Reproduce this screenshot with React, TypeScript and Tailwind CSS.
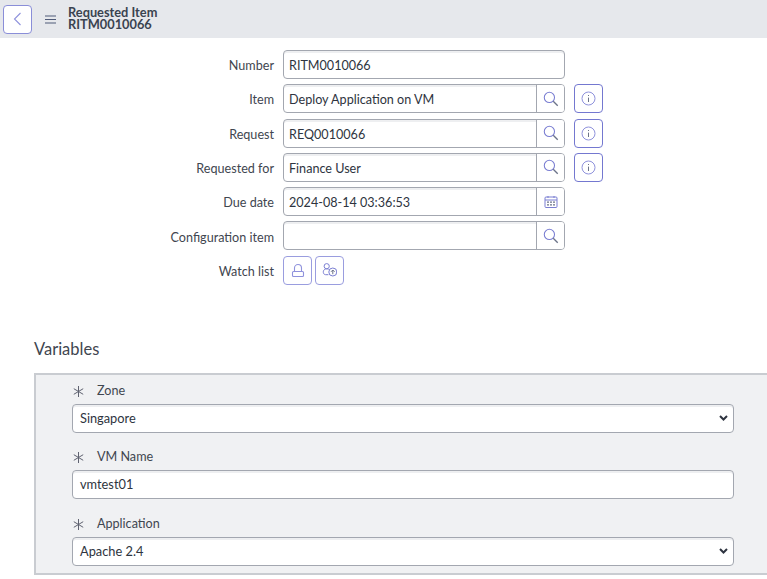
import { ReactNode } from 'react';

const iconStroke = '#7a7ed2';

function SearchIcon() {
    return (
        <svg width="16" height="16" viewBox="0 0 15 15" fill="none" stroke={iconStroke} strokeWidth="1">
            <circle cx="6" cy="6" r="4.8" />
            <path d="M9.6 9.6 L13.8 13.8" stroke="#6b7388" strokeWidth="1.2" />
        </svg>
    );
}

function InfoIcon() {
    return (
        <svg width="15" height="15" viewBox="0 0 15 15" fill="none" stroke="#8f92dc" strokeWidth="1">
            <circle cx="7.5" cy="7.5" r="6.5" />
            <path d="M7.5 6.6 V11 M7.5 4 V5" stroke="#6b7388" />
        </svg>
    );
}

function CalendarIcon() {
    return (
        <svg width="14" height="14" viewBox="0 0 14 14" fill="none" stroke={iconStroke} strokeWidth="1">
            <rect x="1" y="2" width="12" height="10.5" rx="1" />
            <path d="M1 5 H13 M4 1 V3 M10 1 V3" />
            <path d="M3 7.2 H5 M6 7.2 H8 M9 7.2 H11 M3 9.8 H5 M6 9.8 H8 M9 9.8 H11" stroke="#6b7388" strokeWidth="1.2" />
        </svg>
    );
}

function LockIcon() {
    return (
        <svg width="14" height="15" viewBox="0 0 14 15" fill="none" stroke="#8f92dc" strokeWidth="1.1">
            <rect x="1.5" y="8.5" width="11" height="5" rx="1" />
            <path d="M3.5 8.5 V5 a3.5 3.5 0 0 1 7 0 V8.5" />
        </svg>
    );
}

function AddUserIcon() {
    return (
        <svg width="15" height="15" viewBox="0 0 15 15" fill="none" stroke="#7a7ed2" strokeWidth="1">
            <circle cx="4.7" cy="3.2" r="2.6" />
            <path d="M6.6 6.4 C5.4 5.6 3.6 5.6 2.4 6.6 C0.6 8 1 11.6 3.6 11.7 H6.4" />
            <circle cx="10.8" cy="9" r="4" />
            <path d="M10.8 7 V11.2 M9 8.8 L10.8 7 L12.6 8.8" stroke="#6b7388" />
        </svg>
    );
}

function Asterisk() {
    return (
        <svg width="11" height="11" viewBox="0 0 11 11" fill="none" stroke="#5f6270" strokeWidth="1">
            <path d="M5.5 0 V11 M0.8 2.7 L10.2 8.3 M10.2 2.7 L0.8 8.3" />
        </svg>
    );
}

function Chevron() {
    return (
        <svg width="9" height="6" viewBox="0 0 9 6" fill="none" stroke="#2e3440" strokeWidth="2">
            <path d="M1 1 L4.5 4.5 L8 1" />
        </svg>
    );
}

function IconButton({ children, className = '' }: { children: ReactNode; className?: string }) {
    return (
        <button className={`flex h-[29px] w-[29px] shrink-0 items-center justify-center rounded-[4px] border bg-white ${className}`}>
            {children}
        </button>
    );
}

type RowProps = {
    label: string;
    value?: string;
    addon?: ReactNode;
    info?: boolean;
};

function FormRow({ label, value, addon, info }: RowProps) {
    return (
        <div className="flex h-[29px] items-center">
            <label className="w-[274px] shrink-0 pt-[4px] text-right text-[12.6px] text-[#3f4650]">{label}</label>
            <div className="ml-[9px] flex h-[29px] w-[282px] shrink-0 overflow-hidden rounded-[4px] border border-[#a3a7b0] bg-white shadow-[inset_0_2px_0_#eeeff1]">
                <div className="flex-1 pl-[5px] pt-[1px] text-[12.6px] leading-[28px] text-[#2e3440]">{value}</div>
                {addon && <div className="flex w-[28px] items-center justify-center border-l border-[#a3a7b0] bg-white">{addon}</div>}
            </div>
            {info && (
                <IconButton className="ml-[9px] border-[#7478d0]">
                    <InfoIcon />
                </IconButton>
            )}
        </div>
    );
}

function Variable({ label, value, select }: { label: string; value: string; select?: boolean }) {
    return (
        <div>
            <div className="flex h-[21px] items-center">
                <div className="flex w-[25px] justify-start pl-[1px]">
                    <Asterisk />
                </div>
                <span className="text-[12.6px] text-[#3f4650]">{label}</span>
            </div>
            <div className="mt-[2px] flex h-[29px] w-[662px] items-center justify-between rounded-[4px] border border-[#a3a7b0] bg-white pl-[7px] pr-[5px] text-[12.8px] text-[#2e3440] shadow-[inset_0_2px_0_#eeeff1]">
                <span>{value}</span>
                {select && <Chevron />}
            </div>
        </div>
    );
}

export default function App() {
    return (
        <div className="h-[579px] w-[767px] overflow-hidden bg-white font-['Lato',sans-serif]">
            {/* Header */}
            <div className="flex h-[38px] items-center bg-[#e6e8ec]">
                <button className="ml-[3px] flex h-[29px] w-[29px] items-center justify-center rounded-[4px] border border-[#8a8ed8] bg-white">
                    <svg width="9" height="14" viewBox="0 0 9 14" fill="none" stroke="#8f92dc" strokeWidth="1.1">
                        <path d="M7.5 1 L1.5 7 L7.5 13" />
                    </svg>
                </button>
                <svg className="ml-[13px]" width="11" height="9" viewBox="0 0 11 9" stroke="#4f5a78" strokeWidth="1.1">
                    <path d="M0 1 H11 M0 4.5 H11 M0 8 H11" />
                </svg>
                <div className="ml-[12px] -translate-y-[1px] text-[12.8px] font-bold leading-[12px] text-[#3a4350]">
                    <div>Requested Item</div>
                    <div>RITM0010066</div>
                </div>
            </div>

            {/* Form */}
            <div className="mt-[12px] flex flex-col gap-[5.3px]">
                <FormRow label="Number" value="RITM0010066" />
                <FormRow label="Item" value="Deploy Application on VM" addon={<SearchIcon />} info />
                <FormRow label="Request" value="REQ0010066" addon={<SearchIcon />} info />
                <FormRow label="Requested for" value="Finance User" addon={<SearchIcon />} info />
                <FormRow label="Due date" value="2024-08-14 03:36:53" addon={<CalendarIcon />} />
                <FormRow label="Configuration item" addon={<SearchIcon />} />
                <div className="flex h-[29px] items-center">
                    <label className="w-[274px] shrink-0 pt-[4px] text-right text-[12.6px] text-[#3f4650]">Watch list</label>
                    <IconButton className="ml-[9px] border-[#9a9ddf]">
                        <LockIcon />
                    </IconButton>
                    <IconButton className="ml-[3px] border-[#9a9ddf]">
                        <AddUserIcon />
                    </IconButton>
                </div>
            </div>

            {/* Variables */}
            <h2 className="ml-[34px] mt-[54px] text-[16.5px] leading-[20px] text-[#3f4650]">Variables</h2>
            <div className="ml-[34px] mt-[14px] h-[202px] border-2 border-r-0 border-[#c9ccd1] bg-[#f0f1f3] pl-[36px] pt-[6px]">
                <div className="flex flex-col gap-[14.5px]">
                    <Variable label="Zone" value="Singapore" select />
                    <Variable label="VM Name" value="vmtest01" />
                    <Variable label="Application" value="Apache 2.4" select />
                </div>
            </div>
        </div>
    );
}
